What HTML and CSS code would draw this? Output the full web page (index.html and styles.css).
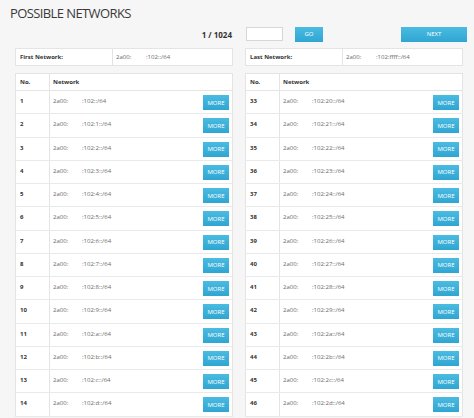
FILE: index.html
```html
<!DOCTYPE html>
<html lang="en">

<head>
    <meta charset="UTF-8">
    <title>Possible Networks</title>
    <link rel="stylesheet" href="styles.css">
</head>

<body>
    <div class="page">
        <h1 class="page-title">POSSIBLE NETWORKS</h1>

        <div class="pager">
            <div class="pager-count">1 / 1024</div>
            <div class="pager-controls">
                <input type="text" class="pager-input">
                <button class="blue-button go-button">GO</button>
                <button class="blue-button next-button">NEXT</button>
            </div>
        </div>

        <div class="range-row">
            <div class="range-box">
                <div class="range-label">First Network:</div>
                <div class="range-value"><span class="prefix">2a00:</span><span>:102::/64</span></div>
            </div>
            <div class="range-box">
                <div class="range-label">Last Network:</div>
                <div class="range-value"><span class="prefix">2a00:</span><span>:102:ffff::/64</span></div>
            </div>
        </div>

        <div class="tables">
            <table class="net-table" id="leftTable">
                <thead>
                    <tr><th class="col-no">No.</th><th>Network</th></tr>
                </thead>
                <tbody></tbody>
            </table>
            <table class="net-table" id="rightTable">
                <thead>
                    <tr><th class="col-no">No.</th><th>Network</th></tr>
                </thead>
                <tbody></tbody>
            </table>
        </div>
    </div>

    <script>
        // Build the rows of both tables
        function fillTable(id, start, count) {
            const body = document.querySelector('#' + id + ' tbody');
            for (let i = 0; i < count; i++) {
                const n = start + i;
                const suffix = (n - 1) === 0 ? '' : (n - 1).toString(16) + ':';
                const row = document.createElement('tr');
                row.innerHTML =
                    '<td class="col-no">' + n + '</td>' +
                    '<td><div class="net-cell"><span class="prefix">2a00:</span>' +
                    '<span class="net-addr">:102:' + suffix + ':/64</span>' +
                    '<button class="blue-button more-button">MORE</button></div></td>';
                body.appendChild(row);
            }
        }

        fillTable('leftTable', 1, 14);
        fillTable('rightTable', 33, 14);
    </script>
</body>

</html>
```

FILE: styles.css
```css
body {
    margin: 0;
    background-color: #f6f6f6;
    font-family: 'Open Sans', sans-serif;
    color: #444;
}

.page {
    padding: 0 11px 0 15px;
}

.page-title {
    margin: 0 0 0 -5px;
    padding-top: 5px;
    font-size: 13px;
    font-weight: 400;
    line-height: 16px;
    color: #3a3a3a;
    letter-spacing: -0.6px;
}

.pager {
    display: grid;
    grid-template-columns: 218px 220px;
    column-gap: 12px;
    margin-top: 5px;
    height: 16px;
    align-items: center;
}

.pager-count {
    text-align: right;
    font-size: 8px;
    font-weight: 700;
    color: #333;
    padding-right: 1px;
}

.pager-controls {
    display: flex;
    align-items: center;
}

.pager-input {
    width: 37px;
    height: 14px;
    box-sizing: border-box;
    border: 1px solid #d6d6d6;
    background: #fff;
    padding: 0;
    margin: 0 0 0 1px;
}

.blue-button {
    background: linear-gradient(#4bbbe1, #2ea6d2);
    color: #fff;
    border: none;
    border-radius: 0;
    font-family: 'Open Sans', sans-serif;
    font-size: 6px;
    padding: 0;
    height: 15px;
    cursor: pointer;
}

.go-button {
    width: 28px;
    margin-left: 12px;
}

.next-button {
    width: 66px;
    margin-left: auto;
    margin-right: -2px;
}

.range-row {
    display: grid;
    grid-template-columns: 218px 218px;
    column-gap: 12px;
    margin-top: 6px;
}

.range-box {
    display: flex;
    background: #fff;
    border: 1px solid #e4e4e4;
    height: 18px;
    box-sizing: border-box;
    font-size: 6px;
    align-items: center;
}

.range-label {
    width: 92px;
    padding-left: 4px;
    font-weight: 700;
    color: #333;
    border-right: 1px solid #e4e4e4;
    height: 100%;
    display: flex;
    align-items: center;
}

.range-value {
    padding-left: 3px;
    color: #6a6a6a;
}

.prefix {
    display: inline-block;
    width: 29px;
}

.range-value .prefix {
    width: 30px;
}

.tables {
    display: grid;
    grid-template-columns: 218px 218px;
    column-gap: 12px;
    margin-top: 7px;
    align-items: start;
}

.net-table {
    width: 100%;
    border-collapse: collapse;
    background: #fff;
    border: 1px solid #e4e4e4;
    font-size: 6px;
}

.net-table th {
    text-align: left;
    font-weight: 700;
    color: #333;
    height: 16px;
    padding: 0 0 0 3px;
    border-bottom: 1px solid #e4e4e4;
}

.net-table td {
    vertical-align: top;
    height: 23.25px;
    box-sizing: border-box;
    padding: 0 0 0 3px;
    border-bottom: 1px solid #e9e9e9;
    color: #6a6a6a;
}

.net-table .col-no {
    width: 29px;
    border-right: 1px solid #e4e4e4;
    padding-left: 4px;
}

.net-table td.col-no {
    font-weight: 700;
    color: #333;
    padding-top: 6px;
}

.net-cell {
    display: flex;
    align-items: flex-start;
    padding-top: 6px;
}

.net-addr {
    flex-grow: 1;
}

.more-button {
    width: 26px;
    margin: -2px 3px 0 0;
}
```
